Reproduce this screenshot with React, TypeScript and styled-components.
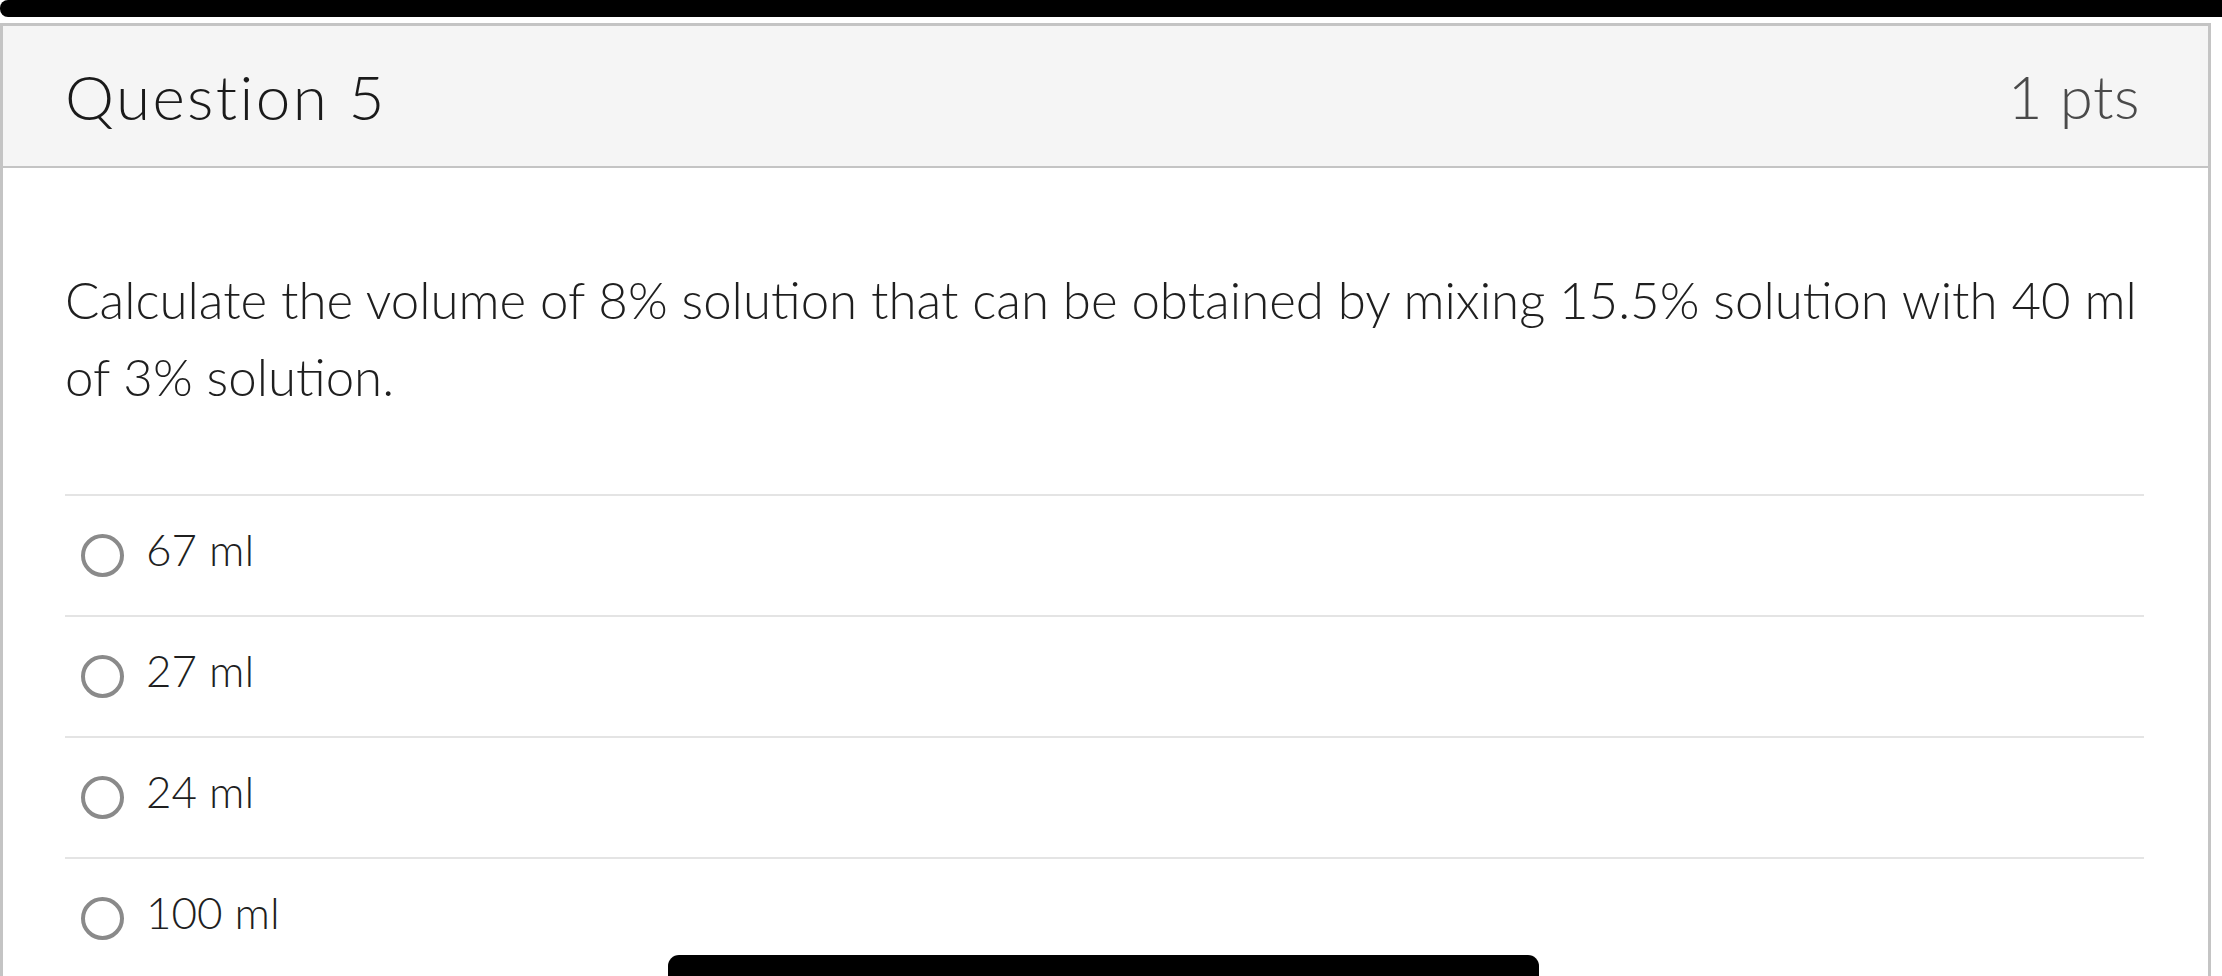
import styled, { createGlobalStyle } from "styled-components";

const GlobalStyle = createGlobalStyle`
  html, body {
    margin: 0;
    padding: 0;
    background: #ffffff;
    overflow: hidden;
  }
  body {
    font-family: Lato, "Open Sans", "Liberation Sans", sans-serif;
    color: #333333;
  }
`;

const Screen = styled.div`
  position: relative;
  width: 2222px;
  height: 976px;
  overflow: hidden;
  display: flex;
  flex-direction: column;
`;

const TopBezel = styled.div`
  height: 17px;
  background: #000000;
  border-radius: 8px 0 0 8px;
  flex-shrink: 0;
`;

const Card = styled.section`
  margin-top: 6px;
  width: 2205px;
  flex: 1;
  border: 3px solid #c4c4c4;
  border-bottom: none;
  background: #ffffff;
`;

const Header = styled.header`
  height: 140px;
  background: #f5f5f5;
  border-bottom: 2px solid #c4c4c4;
  display: flex;
  align-items: center;
  justify-content: space-between;
  padding: 0 68px 0 62px;
`;

const Title = styled.h2`
  margin: 0;
  font-size: 62px;
  font-weight: 300;
  letter-spacing: 2.4px;
  line-height: 1.2;
  color: #1a1a1a;
`;

const Points = styled.span`
  font-size: 60px;
  font-weight: 300;
  letter-spacing: 0.5px;
  line-height: 1.2;
  color: #4a4a4a;
`;

const Body = styled.div`
  padding: 93px 64px 0 62px;
`;

const QuestionText = styled.p`
  margin: 0 0 79px;
  font-size: 51px;
  font-weight: 300;
  line-height: 77px;
  color: #1f1f1f;
`;

const AnswerList = styled.div`
  display: flex;
  flex-direction: column;
`;

const AnswerRow = styled.label`
  height: 119px;
  border-top: 2px solid #e4e4e4;
  display: flex;
  align-items: center;
  gap: 22px;
  padding-left: 16px;
  cursor: pointer;
`;

const Radio = styled.span`
  width: 35px;
  height: 35px;
  border: 4px solid #8a8a8a;
  border-radius: 50%;
  flex-shrink: 0;
`;

const AnswerText = styled.span`
  font-size: 44px;
  font-weight: 300;
  line-height: 1.2;
  margin-bottom: 12px;
  color: #1f1f1f;
`;

const HomeIndicator = styled.div`
  position: absolute;
  left: 668px;
  bottom: 0;
  width: 871px;
  height: 21px;
  background: #000000;
  border-radius: 11px 11px 0 0;
`;

const answers = ["67 ml", "27 ml", "24 ml", "100 ml"];

export default function App() {
  return (
    <Screen>
      <GlobalStyle />
      <TopBezel />
      <Card>
        <Header>
          <Title>Question 5</Title>
          <Points>1 pts</Points>
        </Header>
        <Body>
          <QuestionText>
            Calculate the volume of 8% solution that can be obtained by mixing
            15.5% solution with 40 ml of 3% solution.
          </QuestionText>
          <AnswerList>
            {answers.map((a) => (
              <AnswerRow key={a}>
                <Radio />
                <AnswerText>{a}</AnswerText>
              </AnswerRow>
            ))}
            <AnswerRow />
          </AnswerList>
        </Body>
      </Card>
      <HomeIndicator />
    </Screen>
  );
}
